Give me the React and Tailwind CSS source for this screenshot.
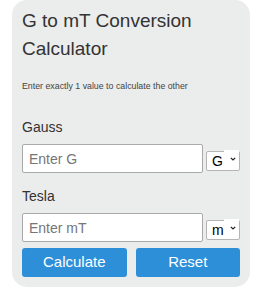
function UnitRow({ placeholder, unit }) {
  return (
    <div className="flex items-center gap-[3px]">
      <input
        type="text"
        placeholder={placeholder}
        className="h-[29px] min-w-0 flex-1 rounded-[2px] border border-[#a9a9a9] bg-white px-[6px] text-[14px] text-[#333] placeholder:text-[#767676] outline-none"
      />
      <div className="relative h-[20px] w-[34px]">
        <select className="h-full w-full appearance-none rounded-[2px] border border-[#b5b5b5] bg-white pl-[5px] pr-[12px] text-[14px] leading-[18px] text-black">
          <option>{unit}</option>
        </select>
        <span className="pointer-events-none absolute right-[1px] top-[1px] bottom-[1px] flex w-[15px] items-center justify-end bg-white pr-[3px]">
          <svg width="6" height="4" viewBox="0 0 6 4" fill="none">
            <path d="M0.8 0.8 L3 3 L5.2 0.8" stroke="#222" strokeWidth="1.2" />
          </svg>
        </span>
      </div>
    </div>
  );
}

export default function App() {
  return (
    <div className="w-[264px] h-[300px] bg-white font-['Liberation_Sans',Arial,sans-serif]">
      <div className="ml-[12px] w-[238px] rounded-[15px] bg-[#ebecec] px-[10px] pt-[7px] pb-[10px] text-[#333]">
        <h1 className="text-[19px] leading-[28px] text-[#333]">G to mT Conversion Calculator</h1>
        <p className="mt-[17px] text-[8.8px] leading-[12px] text-[#444]">Enter exactly 1 value to calculate the other</p>

        <label className="mt-[27px] block text-[14px] leading-[16px]">Gauss</label>
        <div className="mt-[9px]">
          <UnitRow placeholder="Enter G" unit="G" />
        </div>

        <label className="mt-[15px] block text-[14px] leading-[16px]">Tesla</label>
        <div className="mt-[9px]">
          <UnitRow placeholder="Enter mT" unit="mT" />
        </div>

        <div className="mt-[6px] flex gap-[9px]">
          <button className="h-[29px] flex-1 rounded-[3px] bg-[#2d8fd8] text-[15px] text-white">Calculate</button>
          <button className="h-[29px] flex-1 rounded-[3px] bg-[#2d8fd8] text-[15px] text-white">Reset</button>
        </div>
      </div>
    </div>
  );
}
